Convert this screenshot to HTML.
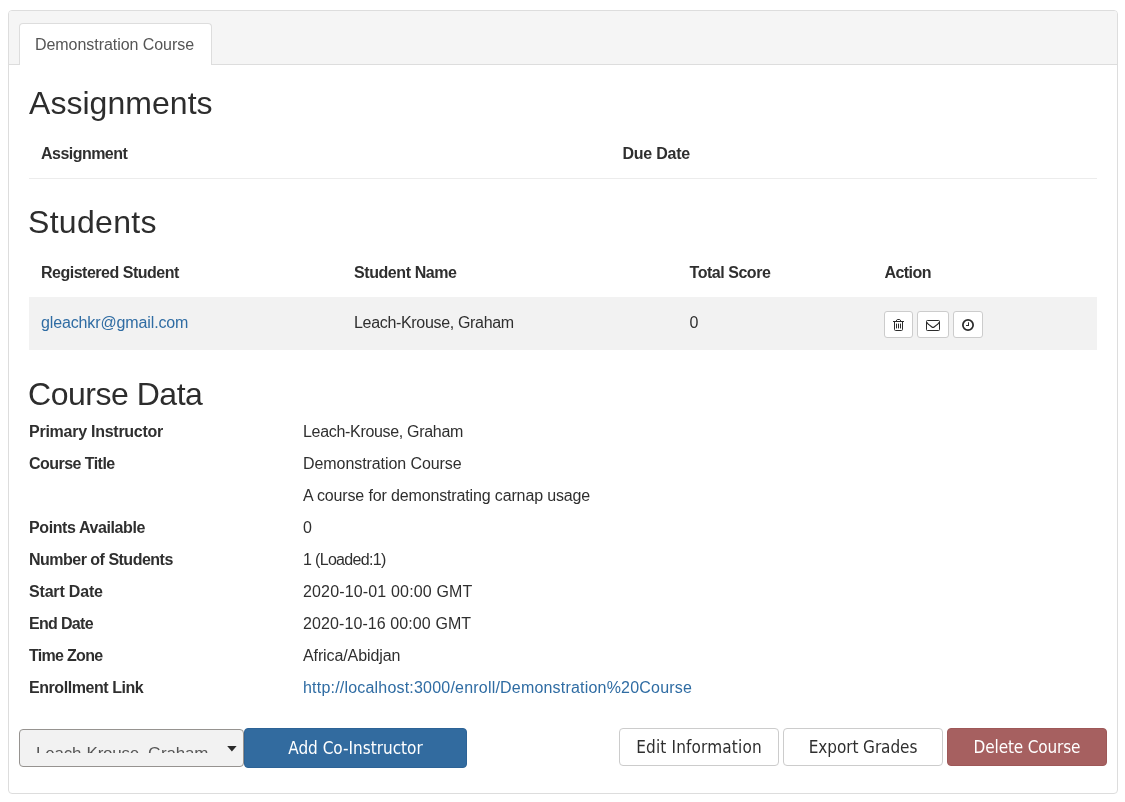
<!DOCTYPE html>
<html lang="en">
<head>
<meta charset="utf-8">
<title>Demonstration Course</title>
<style>
*{box-sizing:border-box}
html,body{margin:0;padding:0;background:#fff}
body{font-family:"Liberation Sans",sans-serif;font-size:16px;line-height:24px;color:#2f2f2f;width:1125px;height:802px;overflow:hidden;position:relative}
a{color:#2f6ca3;text-decoration:none}
.t{white-space:nowrap}
.panel{will-change:transform;position:absolute;left:8px;top:10px;width:1110px;height:784px;border:1px solid #ddd;border-radius:4px;background:#fff}
.panel-heading{position:relative;height:54px;background:#f5f5f5;border-bottom:1px solid #ddd;border-radius:3px 3px 0 0}
.nav-tabs{list-style:none;margin:0;padding:0}
.nav-tabs li{position:absolute;left:10px;top:12px;width:193px;height:42px;border:1px solid #ddd;border-bottom:0;border-radius:4px 4px 0 0;background:#fff}
.nav-tabs li a{display:block;color:#555;padding:0 0 0 15px;line-height:24px;margin-top:9px;white-space:nowrap}
.panel-body{position:absolute;left:20px;top:54px;width:1068px;height:650px}
h2{position:absolute;left:0;font-weight:400;font-size:32px;line-height:34px;margin:0;color:#2d2d2d;white-space:nowrap}
table{position:absolute;left:0;border-collapse:collapse;table-layout:fixed;width:1068px}
th{text-align:left;font-weight:700;padding:0 0 0 12px;white-space:nowrap;vertical-align:top}
td{padding:0 0 0 12px;white-space:nowrap;vertical-align:top}
.btn{display:inline-block;border:1px solid #ccc;border-radius:4px;background:#fff;color:#2f2f2f;text-align:center;white-space:nowrap;vertical-align:top;font-family:inherit}
.btn-xs{border-radius:3px;height:27px;margin:14px 4px 0 0;padding:0;float:left}
.btn-xs svg{display:block;margin:1px 0 0 8px}
dl{margin:0}
.row{position:absolute;left:0;height:32px;width:1068px;white-space:nowrap}
.row dt{position:absolute;left:0;top:0;font-weight:700}
.row dd{position:absolute;left:274px;top:0;margin:0}
.footer{position:absolute;left:0;top:717px;width:1108px;height:60px}
.big{font-family:"DejaVu Sans Condensed","DejaVu Sans","Liberation Sans",sans-serif;font-stretch:condensed;font-size:17px}
.btn-lg{position:absolute;top:0;height:38px;width:160px;line-height:36px;padding:0}
.btn-primary{background:#326b9f;border-color:#2d6396;color:#fff}
.btn-danger{background:#a66060;border-color:#9e5858;color:#fff}
.select{position:absolute;left:10px;top:1px;width:225px;height:38px;border:1px solid #969390;border-radius:4px;background:#f2f2f2;overflow:hidden;color:#555}
.select .txt{position:absolute;left:16px;top:14px;height:9px;overflow:hidden;white-space:nowrap;font-size:17px;line-height:19px}
.select .txt span{display:block;margin-top:0}
.select .arrow{position:absolute;left:207px;top:16px;display:block}
</style>
</head>
<body>
<div class="panel">
  <div class="panel-heading">
    <ul class="nav-tabs"><li><a><span class="t" id="tab" style="letter-spacing:-0.053px">Demonstration Course</span></a></li></ul>
  </div>
  <div class="panel-body">
    <h2 style="top:21px"><span class="t" id="h0" style="letter-spacing:0.040px">Assignments</span></h2>
    <table style="top:65px;border-bottom:1px solid #ececec">
      <colgroup><col style="width:581.5px"><col></colgroup>
      <thead><tr style="height:48px"><th style="padding-top:12px"><span class="t" id="th0" style="letter-spacing:-0.533px">Assignment</span></th><th style="padding-top:12px"><span class="t" id="th1" style="letter-spacing:-0.229px">Due Date</span></th></tr></thead>
    </table>
    <h2 style="top:140px;left:-1px"><span class="t" id="h1" style="letter-spacing:0.314px">Students</span></h2>
    <table style="top:184px">
      <colgroup><col style="width:313px"><col style="width:335.5px"><col style="width:195px"><col></colgroup>
      <thead><tr style="height:48px"><th style="padding-top:12px"><span class="t" id="th2" style="letter-spacing:-0.494px">Registered Student</span></th><th style="padding-top:12px"><span class="t" id="th3" style="letter-spacing:-0.418px">Student Name</span></th><th style="padding-top:12px"><span class="t" id="th4" style="letter-spacing:-0.460px">Total Score</span></th><th style="padding-top:12px"><span class="t" id="th5" style="letter-spacing:-0.560px">Action</span></th></tr></thead>
      <tbody><tr style="height:53px;background:#f2f2f2">
        <td style="padding-top:14px"><a><span class="t" id="td0" style="letter-spacing:-0.129px">gleachkr@gmail.com</span></a></td>
        <td style="padding-top:14px"><span class="t" id="td1" style="letter-spacing:-0.326px">Leach-Krouse, Graham</span></td>
        <td style="padding-top:14px"><span class="t" id="td2" style="letter-spacing:0.000px">0</span></td>
        <td style="padding-left:11.5px"><button class="btn btn-xs" title="Drop" style="width:29px"><svg width="11" height="14" viewBox="0 0 11 14" aria-hidden="true"><g fill="none" stroke="#2b2b2b" stroke-width="1"><path d="M1.5 4V11.4Q1.5 12.5 2.5 12.5H8.5Q9.5 12.5 9.5 11.4V4"/><path d="M3.15 3.3L3.7 2.05Q3.95 1.5 4.5 1.5H6.5Q7.05 1.5 7.3 2.05L7.85 3.3"/><path d="M3.5 6V10M5.5 6V10M7.5 6V10" stroke-linecap="round"/></g><rect x="0" y="3" width="11" height="1" rx=".25" fill="#2b2b2b"/></svg></button><button class="btn btn-xs" title="Email" style="width:32px"><svg width="14" height="14" viewBox="0 0 14 14" aria-hidden="true"><g fill="none" stroke="#2b2b2b" stroke-width="1"><rect x=".5" y="2.5" width="13" height="10" rx=".8"/><path d="M1.1 4.3Q1.4 5.5 2.6 6.4L5.9 9Q7 9.9 8.1 9L11.4 6.4Q12.6 5.5 12.9 4.3" stroke-width="1.2"/></g></svg></button><button class="btn btn-xs" title="Extension" style="width:30px"><svg width="12" height="14" viewBox="0 0 12 14" aria-hidden="true"><circle cx="6" cy="7" r="5.125" fill="none" stroke="#2b2b2b" stroke-width="1.75"/><path d="M6 4.25H7V7.75Q7 8 6.75 8H4.25Q4 8 4 7.75V7.25Q4 7 4.25 7H6Z" fill="#2b2b2b"/></svg></button></td>
      </tr></tbody>
    </table>
    <h2 style="top:312px;left:-1px"><span class="t" id="h2" style="letter-spacing:-0.480px">Course Data</span></h2>
    <dl>
      <div class="row" style="top:355px"><dt><span class="t" id="dt0" style="letter-spacing:-0.259px">Primary Instructor</span></dt><dd><span class="t" id="dd0" style="letter-spacing:-0.316px">Leach-Krouse, Graham</span></dd></div>
      <div class="row" style="top:387px"><dt><span class="t" id="dt1" style="letter-spacing:-0.545px">Course Title</span></dt><dd><span class="t" id="dd1" style="letter-spacing:-0.074px">Demonstration Course</span></dd></div>
      <div class="row" style="top:419px"><dd><span class="t" id="dd2" style="letter-spacing:-0.142px">A course for demonstrating carnap usage</span></dd></div>
      <div class="row" style="top:451px"><dt><span class="t" id="dt3" style="letter-spacing:-0.400px">Points Available</span></dt><dd><span class="t" id="dd3" style="letter-spacing:0.000px">0</span></dd></div>
      <div class="row" style="top:483px"><dt><span class="t" id="dt4" style="letter-spacing:-0.506px">Number of Students</span></dt><dd><span class="t" id="dd4" style="letter-spacing:-0.673px">1 (Loaded:1)</span></dd></div>
      <div class="row" style="top:515px"><dt><span class="t" id="dt5" style="letter-spacing:-0.178px">Start Date</span></dt><dd><span class="t" id="dd5" style="letter-spacing:0.158px">2020-10-01 00:00 GMT</span></dd></div>
      <div class="row" style="top:547px"><dt><span class="t" id="dt6" style="letter-spacing:-0.686px">End Date</span></dt><dd><span class="t" id="dd6" style="letter-spacing:0.095px">2020-10-16 00:00 GMT</span></dd></div>
      <div class="row" style="top:579px"><dt><span class="t" id="dt7" style="letter-spacing:-0.700px">Time Zone</span></dt><dd><span class="t" id="dd7" style="letter-spacing:-0.108px">Africa/Abidjan</span></dd></div>
      <div class="row" style="top:611px"><dt><span class="t" id="dt8" style="letter-spacing:-0.443px">Enrollment Link</span></dt><dd><a><span class="t" id="dd8" style="letter-spacing:0.200px">http://localhost:3000/enroll/Demonstration%20Course</span></a></dd></div>
    </dl>
  </div>
  <div class="footer">
    <div class="select"><div class="txt"><span class="t" id="sel" style="letter-spacing:-0.232px">Leach-Krouse, Graham</span></div><svg class="arrow" width="10" height="6" viewBox="0 0 10 6" aria-hidden="true"><path d="M.2 0H9.6L4.9 5.4Z" fill="#2b2b2b"/></svg></div>
    <button class="btn btn-lg btn-primary big" style="left:235px;width:223px;height:40px;line-height:38px"><span class="t" id="b0" style="letter-spacing:0.000px">Add Co-Instructor</span></button>
    <button class="btn btn-lg big" style="left:610px"><span class="t" id="b1" style="letter-spacing:0.160px">Edit Information</span></button>
    <button class="btn btn-lg big" style="left:774px"><span class="t" id="b2" style="letter-spacing:-0.067px">Export Grades</span></button>
    <button class="btn btn-lg btn-danger big" style="left:938px"><span class="t" id="b3" style="letter-spacing:-0.133px">Delete Course</span></button>
  </div>
</div>
</body>
</html>
